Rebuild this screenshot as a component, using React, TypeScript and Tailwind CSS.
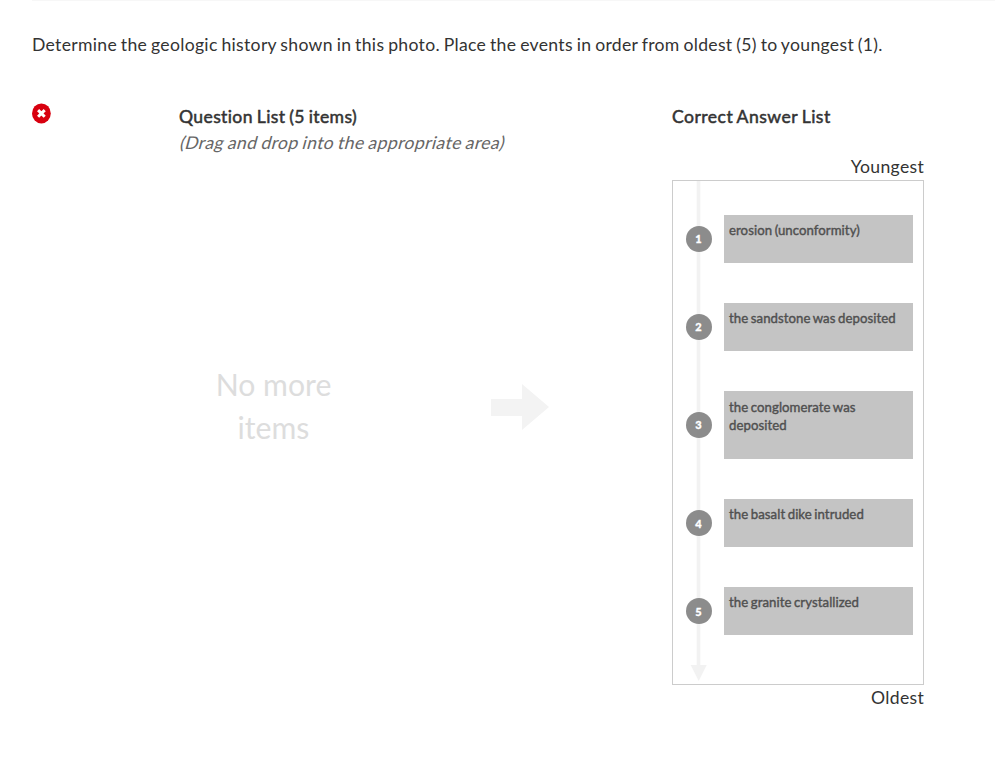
import React from "react";
import clsx from "clsx";

interface AnswerItem {
    position: number;
    label: string;
    multiline?: boolean;
}

const answers: AnswerItem[] = [
    { position: 1, label: "erosion (unconformity)" },
    { position: 2, label: "the sandstone was deposited" },
    { position: 3, label: "the conglomerate was deposited", multiline: true },
    { position: 4, label: "the basalt dike intruded" },
    { position: 5, label: "the granite crystallized" },
];

const IncorrectIcon: React.FC = () => (
    <svg width="20" height="21" viewBox="0 0 20 21" aria-label="Incorrect">
        <ellipse cx="9.4" cy="10.4" rx="9.4" ry="10" fill="#d8000f" />
        <path d="M6.1 7.1l6.6 6.6M12.7 7.1l-6.6 6.6" stroke="#fff" strokeWidth="3" />
    </svg>
);

const AnswerRow: React.FC<AnswerItem> = ({ position, label, multiline }) => (
    <li className="flex items-center gap-3">
        <span className="flex h-[26px] w-[26px] shrink-0 items-center justify-center rounded-full bg-[#808080]/90 text-[11px] leading-none font-black text-white [-webkit-text-stroke:0.3px_#fff]">
            {position}
        </span>
        <div
            className={clsx(
                "w-[189px] bg-[#c4c4c4] px-[5.5px] text-[13.2px] leading-[18px] tracking-[0.06px] [word-spacing:-0.9px] text-[#505050] [-webkit-text-stroke:0.4px_#505050]",
                multiline ? "h-[68px] pt-[7px]" : "h-[47.5px] pt-[6px]"
            )}
        >
            {label}
        </div>
    </li>
);

const AnswerList: React.FC = () => (
    <div className="relative h-[504.5px] w-[252px] border border-[#cccccc]">
        {/* Timeline running behind the numbers */}
        <svg className="absolute top-0 left-[17px]" width="18" height="502" viewBox="0 0 18 502">
            <path d="M6.7 0h3.6v484h6.4l-8 16-8-16h6z" fill="#f2f2f2" />
        </svg>
        <ol className="relative flex flex-col gap-[40.45px] pt-[34.1px] pl-[12.5px]">
            {answers.map((item) => (
                <AnswerRow key={item.position} {...item} />
            ))}
        </ol>
    </div>
);

export default function App() {
    return (
        <div className="min-h-[766px] bg-white font-[Lato,sans-serif] text-[17.6px] leading-[26px] text-[#333333] [font-variant-ligatures:none]">
            <div className="ml-8 h-px bg-[#f7f7f7]" />
            <main className="px-8 pt-[31px]">
                <p className="tracking-[0.31px] [word-spacing:-1px]">Determine the geologic history shown in this photo. Place the events in order from oldest (5) to youngest (1).</p>

                <div className="mt-[45px] flex items-start">
                    <div className="w-[147px] shrink-0">
                        <IncorrectIcon />
                    </div>

                    <section className="w-[493px] shrink-0 pt-px">
                        <h2 className="tracking-[0.36px] [word-spacing:-1px] [-webkit-text-stroke:0.5px_#333333]">Question List (5 items)</h2>
                        <p className="origin-left skew-x-[-15deg] pl-[1.5px] tracking-[0.38px] [word-spacing:-1px] text-[#666666]">(Drag and drop into the appropriate area)</p>
                        <div className="mt-[208px] flex items-center">
                            <p className="-mt-px w-[189px] px-8 text-center text-[30.2px] leading-[43px] text-[#dddddd]">No more items</p>
                            <svg className="ml-[123px]" width="58" height="46" viewBox="0 0 58 46">
                                <path d="M0 15h31V0l27 23-27 23V32H0z" fill="#f3f3f3" />
                            </svg>
                        </div>
                    </section>

                    <section className="w-[252px] shrink-0 pt-px">
                        <h2 className="tracking-[0.46px] [word-spacing:-1px] [-webkit-text-stroke:0.5px_#333333]">Correct Answer List</h2>
                        <div className="mt-6 text-right tracking-[0.3px]">Youngest</div>
                        <AnswerList />
                        <div className="text-right tracking-[0.3px]">Oldest</div>
                    </section>
                </div>
            </main>
        </div>
    );
}
